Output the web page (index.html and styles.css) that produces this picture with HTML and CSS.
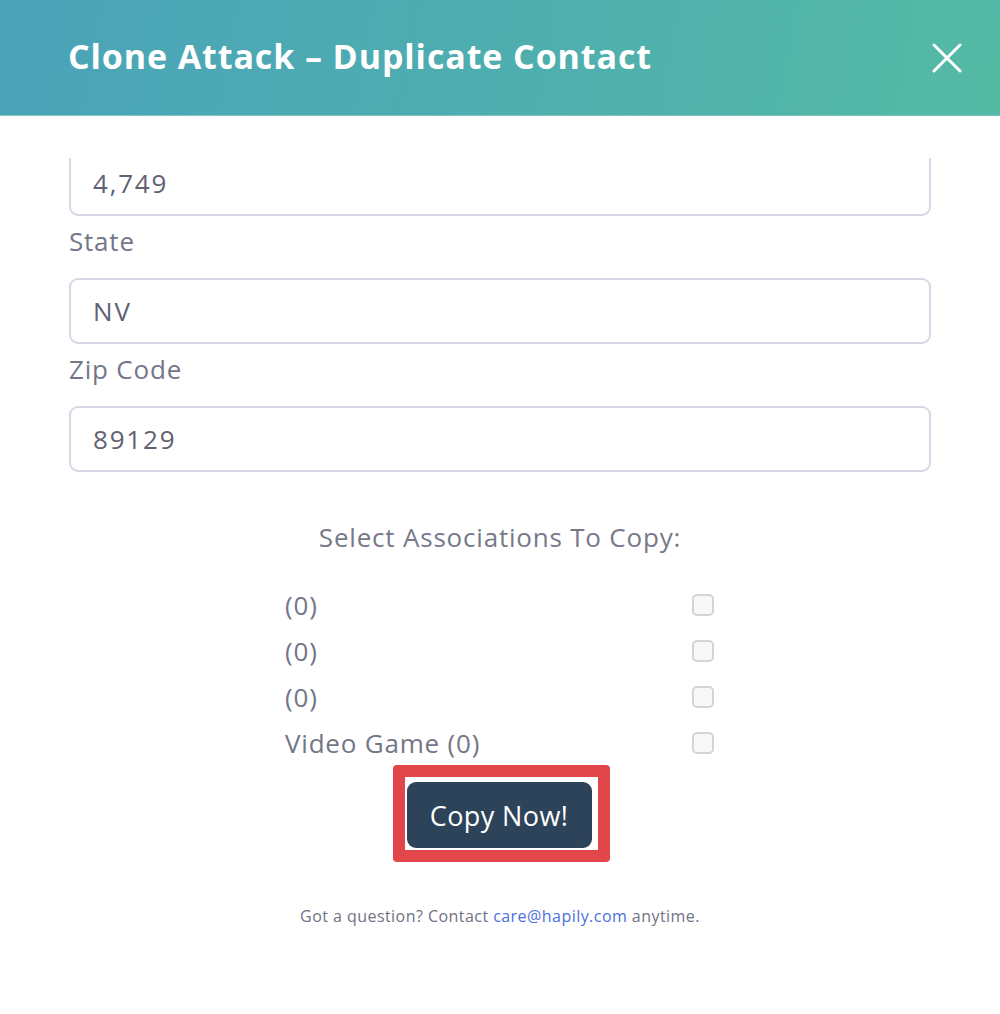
FILE: index.html
```html
<!DOCTYPE html>
<html>
<head>
  <title>Clone Attack</title>
  <meta charset="UTF-8">
  <link rel="stylesheet" href="styles.css">
</head>
<body>

  <!-- Modal header -->
  <header class="modal-header">
    <h1>Clone Attack – Duplicate Contact</h1>
    <button class="close-btn" aria-label="Close">
      <svg width="30" height="30" viewBox="0 0 30 30">
        <path d="M2 2 L28 28 M28 2 L2 28" stroke="#fff" stroke-width="3" stroke-linecap="round"/>
      </svg>
    </button>
  </header>

  <div class="modal-body">
    <!-- Scrolled property fields -->
    <div class="fields">
      <input class="field-input first" type="text" value="4,749">
      <label class="field-label">State</label>
      <input class="field-input" type="text" value="NV">
      <label class="field-label">Zip Code</label>
      <input class="field-input" type="text" value="89129">
    </div>

    <h2 class="assoc-title">Select Associations To Copy:</h2>

    <div class="assoc-list">
      <div class="assoc-row"><span>(0)</span><input type="checkbox" class="check"></div>
      <div class="assoc-row"><span>(0)</span><input type="checkbox" class="check"></div>
      <div class="assoc-row"><span>(0)</span><input type="checkbox" class="check"></div>
      <div class="assoc-row"><span>Video Game (0)</span><input type="checkbox" class="check"></div>
    </div>

    <div class="copy-wrap">
      <div class="highlight">
        <button class="copy-btn">Copy Now!</button>
      </div>
    </div>

    <p class="footer-note">Got a question? Contact <a href="#">care@hapily.com</a> anytime.</p>
  </div>

</body>
</html>
```

FILE: styles.css
```css
html, body {
  margin: 0;
  height: 100%;
}

body {
  font-family: "Open Sans", sans-serif;
  background-color: #fff;
  color: #6f7284;
}

/* Header */
.modal-header {
  height: 116px;
  display: flex;
  align-items: center;
  justify-content: space-between;
  padding: 0 38px 0 68px;
  background: linear-gradient(100deg, #4aa3b9 0%, #4fb0ad 60%, #54baa4 100%);
  box-sizing: border-box;
  border-bottom: 1px solid #7cc7c0;
}

.modal-header h1 {
  margin: 0 0 4px 0;
  color: #fff;
  font-size: 34px;
  line-height: 44px;
  font-weight: 700;
  letter-spacing: 0.9px;
}

.close-btn {
  background: none;
  border: none;
  padding: 0;
  width: 30px;
  height: 30px;
  cursor: pointer;
}

/* Body */
.modal-body {
  padding: 0 69px;
}

.fields {
  margin-top: 42px;
  overflow: hidden;
  display: flex;
  flex-direction: column;
}

.field-input {
  height: 66px;
  border: 2px solid #d6d7e4;
  border-radius: 9px;
  padding: 0 22px;
  font-family: inherit;
  font-size: 26px;
  letter-spacing: 1.8px;
  color: #5f6272;
  box-sizing: border-box;
  outline: none;
}

.field-input.first {
  margin-top: -8px;
}

.field-label {
  font-size: 26px;
  letter-spacing: 0.8px;
  line-height: 36px;
  margin: 7px 0 19px 0;
  color: #737688;
}

.assoc-title {
  text-align: center;
  font-size: 26px;
  letter-spacing: 0.8px;
  line-height: 36px;
  font-weight: 400;
  color: #767989;
  margin: 47px 0 28px 0;
}

.assoc-list {
  width: 430px;
  margin: 0 auto;
  transform: translateX(-1px);
}

.assoc-row {
  display: flex;
  justify-content: space-between;
  align-items: center;
  height: 46px;
  font-size: 26px;
  letter-spacing: 0.8px;
  color: #737688;
  padding-left: 1px;
}

.assoc-row span {
  margin-bottom: 3px;
}

.check {
  appearance: none;
  width: 22px;
  height: 22px;
  margin: 0 0 2px 0;
  border: 2px solid #d4d4d8;
  border-radius: 5px;
  background: #f7f8f8;
  box-sizing: border-box;
}

.copy-wrap {
  display: flex;
  justify-content: center;
  margin-top: -2px;
}

.highlight {
  border: 12px solid #e2464a;
  border-radius: 4px;
  padding: 5px 6px 2px 2px;
  margin-left: 2px;
}

.copy-btn {
  display: block;
  width: 185px;
  height: 66px;
  background: #2d435a;
  color: #fff;
  border: none;
  border-radius: 9px;
  font-family: inherit;
  font-size: 27px;
  letter-spacing: 0.4px;
  cursor: pointer;
}

.footer-note {
  text-align: center;
  font-size: 16px;
  letter-spacing: 0.45px;
  line-height: 22px;
  color: #6f7284;
  margin: 43px 0 0 0;
}

.footer-note a {
  color: #4b6fe0;
  text-decoration: none;
}
```
